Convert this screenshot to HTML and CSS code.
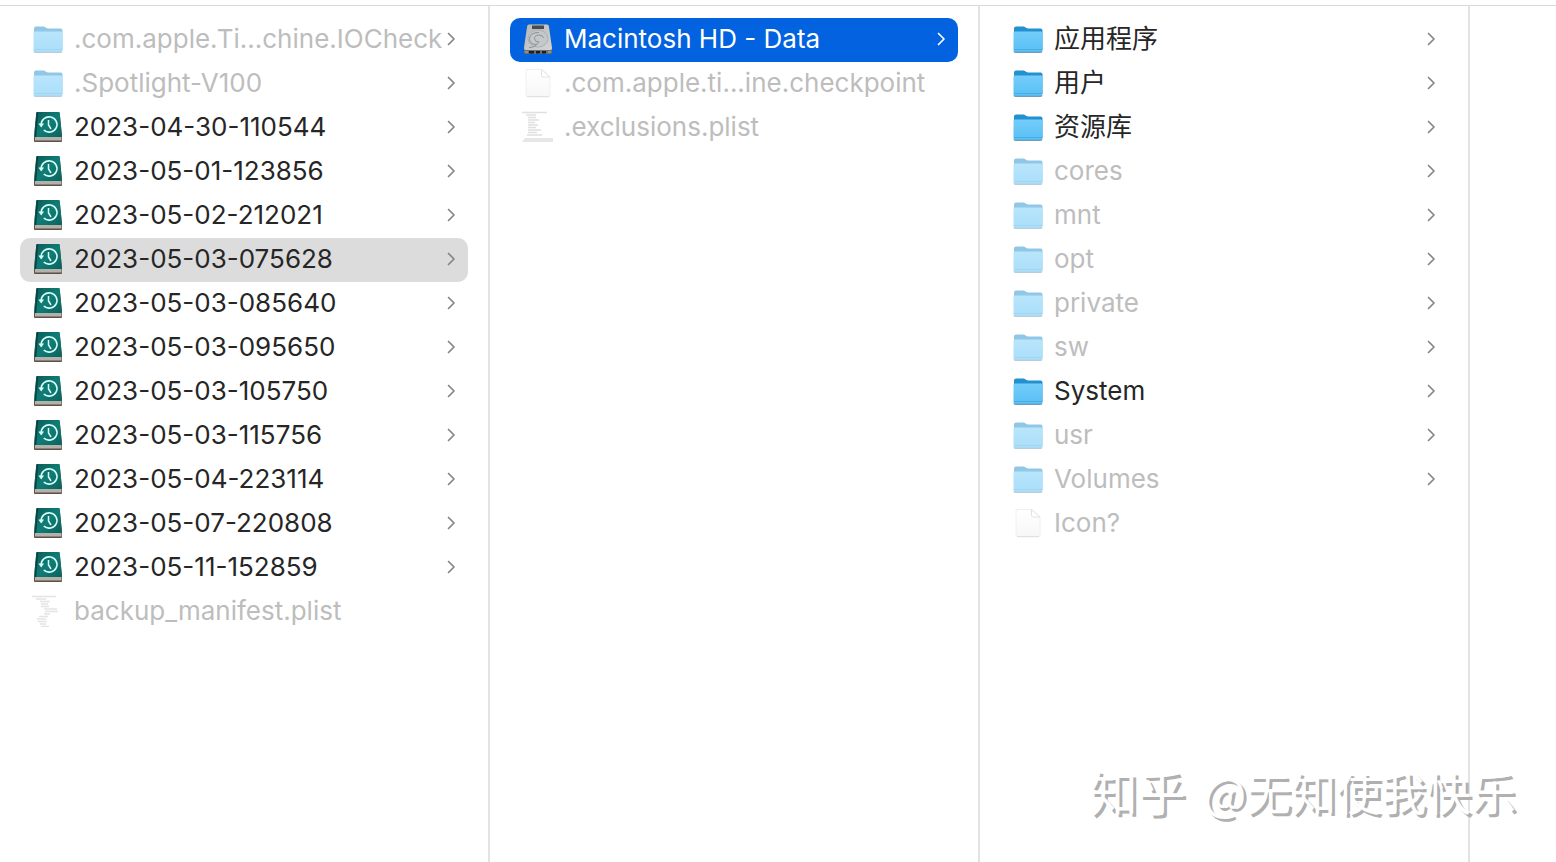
FILE: index.html
```
<!DOCTYPE html>
<html lang="zh-CN">
<head>
  <meta charset="UTF-8">
  <meta name="viewport" content="width=device-width, initial-scale=1.0">
  <title>Time Machine</title>
  <link rel="stylesheet" href="styles.css">
</head>
<body>
  <svg class="sprite" aria-hidden="true">
    <defs>
      <linearGradient id="folderFront" x1="0" y1="0" x2="0" y2="1">
        <stop offset="0" stop-color="#74cdfa"/>
        <stop offset="1" stop-color="#58bff5"/>
      </linearGradient>
      <linearGradient id="bookCover" x1="0" y1="0" x2="1" y2="1">
        <stop offset="0" stop-color="#0b5a58"/>
        <stop offset="0.5" stop-color="#0f7d76"/>
        <stop offset="1" stop-color="#0b625e"/>
      </linearGradient>
      <linearGradient id="diskTop" x1="0" y1="0" x2="1" y2="1">
        <stop offset="0" stop-color="#b4b8ba"/>
        <stop offset="1" stop-color="#d2d5d6"/>
      </linearGradient>
      <linearGradient id="paper" x1="0" y1="0" x2="0" y2="1">
        <stop offset="0" stop-color="#ffffff"/>
        <stop offset="1" stop-color="#f7f7f7"/>
      </linearGradient>
    </defs>
    <symbol id="folder" viewBox="0 0 32 32">
      <path d="M2 27V5.500q0-2 2-2h7.500q1 0 1.800.7l1.200.9q.6.400 1.500.4h12.500q2 0 2 2V27z" fill="#2390cf"/>
      <path d="M1.500 10q0-1.500 1.500-1.500h26q1.500 0 1.500 1.500v17q0 2-2 2h-25q-2 0-2-2z" fill="url(#folderFront)"/>
      <path d="M2 26.500h28" stroke="#48ade4" stroke-width="1"/>
      <path d="M2 28.200q.5 1.200 2 1.200h24q1.500 0 2-1.200" fill="none" stroke="#6c9eb9" stroke-width="1.400"/>
    </symbol>
    <symbol id="backup" viewBox="0 0 32 32">
      <path d="M5.500 1h21q1 0 1.200 1L30 25v5q0 1-1 1H3q-1 0-1-1v-5L4.300 2q.2-1 1.200-1z" fill="#5b5148"/>
      <path d="M3 26h26.500v3.500H3z" fill="#b5b0a8"/>
      <path d="M5.500 1h21q1 0 1.200 1L30 26H2L4.300 2q.2-1 1.200-1z" fill="url(#bookCover)"/>
      <path d="M5.400 1.500L3.500 26" stroke="#07423f" stroke-width="1.500"/>
      <path d="M9.200 14.200a7.900 7.600 0 1 1 2.600 5" fill="none" stroke="#d7fff7" stroke-width="1.600"/>
      <path d="M6.300 12.500h5.800l-2.900 4z" fill="#d7fff7"/>
      <path d="M16.500 9v5l2.500 4" fill="none" stroke="#d7fff7" stroke-width="1.500"/>
    </symbol>
    <symbol id="disk" viewBox="0 0 32 32">
      <path d="M7 1.500h18q1.500 0 1.800 1.500L30 25v4.500q0 1.500-1.500 1.500h-25Q2 31 2 29.500V25L5.200 3q.3-1.500 1.800-1.500z" fill="#6a6f73"/>
      <path d="M7 1.500h18q1.500 0 1.800 1.500L30 25q0 2-1.500 2h-25Q2 27 2 25L5.200 3q.3-1.500 1.800-1.500z" fill="url(#diskTop)"/>
      <path d="M10 2.500h12V6H10z" fill="#454b50"/>
      <ellipse cx="16" cy="15.500" rx="10" ry="8.500" fill="#c4c8ca" stroke="#a1a6a9" stroke-width=".7"/>
      <path d="M17 9.500q-9 0-9.500 6t7 6M21.500 15a4.500 3.500 0 1 0-4 4M7 24.500q7 0 9-5" fill="none" stroke="#858b8f" stroke-width=".9"/>
      <path d="M7 28h5v2.500H7zM14 28h4v2.500h-4zM20 28h4v2.500h-4z" fill="#1b1e21"/>
      <path d="M3 28h3v2H3zM26 28h3v2h-3z" fill="#8d9295"/>
    </symbol>
    <symbol id="page" viewBox="0 0 32 32">
      <path d="M5 2.500h14.500L28 10v18q0 1.500-1.500 1.500h-20Q4 29.500 4 28V4q0-1.500 1-1.500z" fill="url(#paper)" stroke="#f0f0f0" stroke-width="1"/>
      <path d="M19.500 2.500V8.500q0 1.500 1.500 1.500h7z" fill="#fff" stroke="#e2e2e2" stroke-width="1"/>
      <path d="M5 29.700h22" stroke="#dedede" stroke-width="1"/>
    </symbol>
    <symbol id="plist" viewBox="0 0 32 32">
      <path d="M0 1.500h25M4 4h10M6 6.500h8M6 9h11M6 11.500h7M6 14h10M6 16.500h8M6 19h13M6 21.500h9M5 24h15" stroke="#e0e0e0" stroke-width="1.500"/>
      <path d="M3 27h28v4H0z" fill="#e6e6e6"/>
    </symbol>
    <symbol id="manifest" viewBox="0 0 32 32">
      <path d="M0 1.500h24M4 4h10M8 6.500h10M9 9h7M9 11.500h8M12 14h13M13 16.500h13M12 19h6M7 21.500h9M5 24h9M6 26.500h9M8 29h6M9 31.500h8" stroke="#e4e4e4" stroke-width="1.400"/>
    </symbol>
    <symbol id="chevron" viewBox="0 0 10 16">
      <path d="M2.500 2.500l5.500 5.500l-5.500 5.500" fill="none" stroke="currentColor" stroke-width="1.700" stroke-linecap="round" stroke-linejoin="round"/>
    </symbol>
  </svg>

  <main class="browser">
    <ul class="column">
      <li><a class="row dim" href="#"><svg class="icon"><use href="#folder"/></svg><span class="name">.com.apple.Ti...chine.IOCheck</span><svg class="chevron"><use href="#chevron"/></svg></a></li>
      <li><a class="row dim" href="#"><svg class="icon"><use href="#folder"/></svg><span class="name">.Spotlight-V100</span><svg class="chevron"><use href="#chevron"/></svg></a></li>
      <li><a class="row" href="#"><svg class="icon"><use href="#backup"/></svg><span class="name">2023-04-30-110544</span><svg class="chevron"><use href="#chevron"/></svg></a></li>
      <li><a class="row" href="#"><svg class="icon"><use href="#backup"/></svg><span class="name">2023-05-01-123856</span><svg class="chevron"><use href="#chevron"/></svg></a></li>
      <li><a class="row" href="#"><svg class="icon"><use href="#backup"/></svg><span class="name">2023-05-02-212021</span><svg class="chevron"><use href="#chevron"/></svg></a></li>
      <li><a class="row open" href="#"><svg class="icon"><use href="#backup"/></svg><span class="name">2023-05-03-075628</span><svg class="chevron"><use href="#chevron"/></svg></a></li>
      <li><a class="row" href="#"><svg class="icon"><use href="#backup"/></svg><span class="name">2023-05-03-085640</span><svg class="chevron"><use href="#chevron"/></svg></a></li>
      <li><a class="row" href="#"><svg class="icon"><use href="#backup"/></svg><span class="name">2023-05-03-095650</span><svg class="chevron"><use href="#chevron"/></svg></a></li>
      <li><a class="row" href="#"><svg class="icon"><use href="#backup"/></svg><span class="name">2023-05-03-105750</span><svg class="chevron"><use href="#chevron"/></svg></a></li>
      <li><a class="row" href="#"><svg class="icon"><use href="#backup"/></svg><span class="name">2023-05-03-115756</span><svg class="chevron"><use href="#chevron"/></svg></a></li>
      <li><a class="row" href="#"><svg class="icon"><use href="#backup"/></svg><span class="name">2023-05-04-223114</span><svg class="chevron"><use href="#chevron"/></svg></a></li>
      <li><a class="row" href="#"><svg class="icon"><use href="#backup"/></svg><span class="name">2023-05-07-220808</span><svg class="chevron"><use href="#chevron"/></svg></a></li>
      <li><a class="row" href="#"><svg class="icon"><use href="#backup"/></svg><span class="name">2023-05-11-152859</span><svg class="chevron"><use href="#chevron"/></svg></a></li>
      <li><a class="row dim" href="#"><svg class="icon plain"><use href="#manifest"/></svg><span class="name">backup_manifest.plist</span></a></li>
    </ul>

    <ul class="column">
      <li><a class="row selected" href="#"><svg class="icon"><use href="#disk"/></svg><span class="name">Macintosh HD - Data</span><svg class="chevron"><use href="#chevron"/></svg></a></li>
      <li><a class="row dim" href="#"><svg class="icon plain"><use href="#page"/></svg><span class="name">.com.apple.ti...ine.checkpoint</span></a></li>
      <li><a class="row dim" href="#"><svg class="icon plain"><use href="#plist"/></svg><span class="name">.exclusions.plist</span></a></li>
    </ul>

    <ul class="column">
      <li><a class="row" href="#"><svg class="icon"><use href="#folder"/></svg><span class="name">应用程序</span><svg class="chevron"><use href="#chevron"/></svg></a></li>
      <li><a class="row" href="#"><svg class="icon"><use href="#folder"/></svg><span class="name">用户</span><svg class="chevron"><use href="#chevron"/></svg></a></li>
      <li><a class="row" href="#"><svg class="icon"><use href="#folder"/></svg><span class="name">资源库</span><svg class="chevron"><use href="#chevron"/></svg></a></li>
      <li><a class="row dim" href="#"><svg class="icon"><use href="#folder"/></svg><span class="name">cores</span><svg class="chevron"><use href="#chevron"/></svg></a></li>
      <li><a class="row dim" href="#"><svg class="icon"><use href="#folder"/></svg><span class="name">mnt</span><svg class="chevron"><use href="#chevron"/></svg></a></li>
      <li><a class="row dim" href="#"><svg class="icon"><use href="#folder"/></svg><span class="name">opt</span><svg class="chevron"><use href="#chevron"/></svg></a></li>
      <li><a class="row dim" href="#"><svg class="icon"><use href="#folder"/></svg><span class="name">private</span><svg class="chevron"><use href="#chevron"/></svg></a></li>
      <li><a class="row dim" href="#"><svg class="icon"><use href="#folder"/></svg><span class="name">sw</span><svg class="chevron"><use href="#chevron"/></svg></a></li>
      <li><a class="row" href="#"><svg class="icon"><use href="#folder"/></svg><span class="name">System</span><svg class="chevron"><use href="#chevron"/></svg></a></li>
      <li><a class="row dim" href="#"><svg class="icon"><use href="#folder"/></svg><span class="name">usr</span><svg class="chevron"><use href="#chevron"/></svg></a></li>
      <li><a class="row dim" href="#"><svg class="icon"><use href="#folder"/></svg><span class="name">Volumes</span><svg class="chevron"><use href="#chevron"/></svg></a></li>
      <li><a class="row dim" href="#"><svg class="icon plain"><use href="#page"/></svg><span class="name">Icon?</span></a></li>
    </ul>

    <div class="rest"></div>
  </main>

  <div class="watermark"><span class="brand">知乎</span><span>@无知使我快乐</span></div>
</body>
</html>
```

FILE: styles.css
```
* { box-sizing: border-box; }
body {
  display: flex;
  flex-direction: column;
  min-height: 100vh;
  margin: 0;
  padding-top: 5px;
  position: relative;
  background: #fff;
  color: #262626;
  font-family: Inter, "Noto Sans CJK SC", sans-serif;
  font-size: 26px;
  line-height: 42px;
}
.sprite { position: absolute; width: 0; height: 0; }
.browser {
  flex: 1;
  display: grid;
  grid-template-columns: 245fr 245fr 245fr 43fr;
  border-top: 1px solid #d9d9d9;
}
.column {
  min-width: 0;
  margin: 0;
  padding: 12px 20px;
  list-style: none;
  border-right: 2px solid #e3e3e3;
}
.row {
  display: flex;
  align-items: center;
  gap: 10px;
  height: 44px;
  padding: 0 12px 2px;
  border-radius: 10px;
  color: inherit;
  text-decoration: none;
}
.icon { flex: none; width: 32px; height: 32px; }
.name {
  flex: 1;
  min-width: 0;
  white-space: nowrap;
}
.chevron { flex: none; width: 10px; height: 16px; color: #858585; }
.dim .name { color: #bdbdbd; }
.dim .icon { opacity: 0.5; }
.dim .plain { opacity: 1; }
.open { background: #dcdcdc; }
.selected { background: #0262e0; color: #fff; }
.selected .chevron { color: #fff; }
.watermark {
  position: absolute;
  right: 40px;
  bottom: 38px;
  display: flex;
  align-items: baseline;
  gap: 18px;
  color: #fff;
  font-family: "Noto Sans CJK SC", sans-serif;
  font-size: 45px;
  line-height: 64px;
  text-shadow: 3px 3px 0 #b0b0b0;
  white-space: nowrap;
}
.brand { font-size: 48px; }
```
